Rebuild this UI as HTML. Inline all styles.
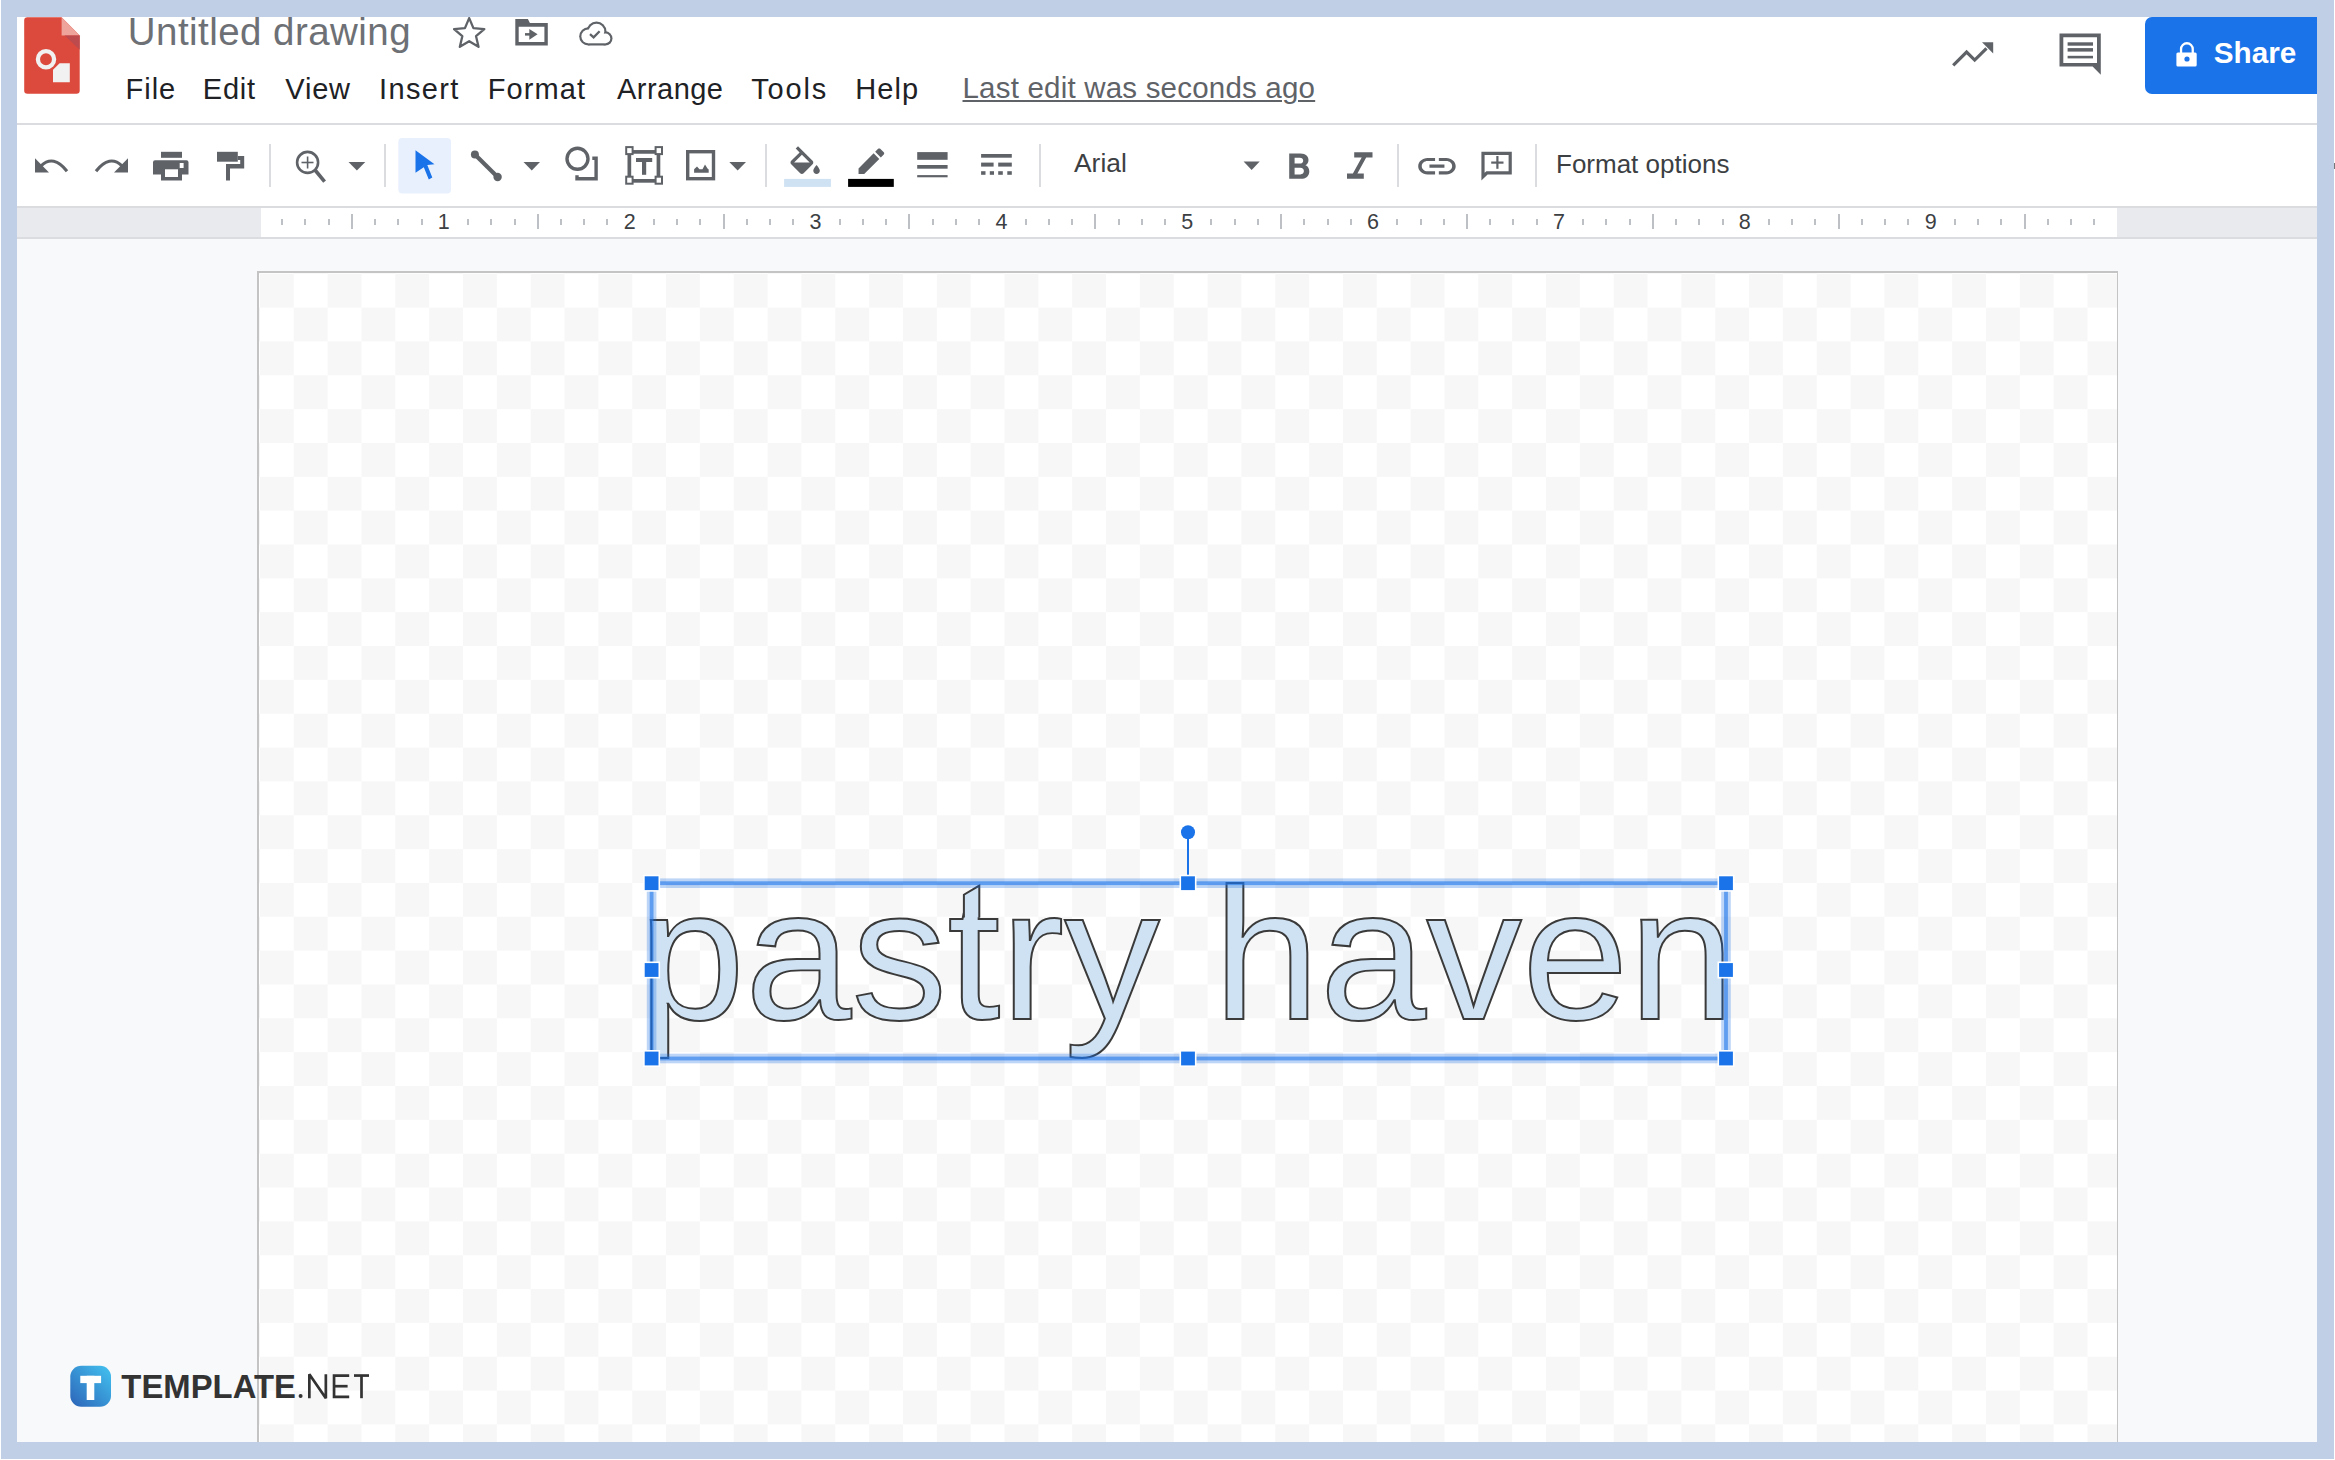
<!DOCTYPE html>
<html><head><meta charset="utf-8">
<style>
html,body{margin:0;padding:0;}
body{width:2335px;height:1460px;position:relative;overflow:hidden;background:#fff;font-family:"Liberation Sans",sans-serif;}
.a{position:absolute;}
.frame{position:absolute;left:1px;top:0;width:2333px;height:1459px;background:#c0cfe5;}
.main{position:absolute;left:17px;top:17px;width:2300px;height:1425px;overflow:hidden;background:#fff;}
.in{position:absolute;left:-17px;top:-17px;width:2335px;height:1460px;}
.t{position:absolute;white-space:nowrap;}
.menu{font-size:29px;line-height:29px;top:75px;color:#202124;}
.tk{width:2px;background:#bdc1c6;}
.rn{width:40px;text-align:center;top:211.8px;font-size:21.5px;line-height:21.5px;color:#3c4043;}
svg.ov{position:absolute;left:0;top:0;overflow:visible;}
</style></head>
<body>
<div class="frame"></div>
<div class="a" style="left:2334px;top:163px;width:1px;height:6px;background:#777"></div>
<div class="main"><div class="in">

<!-- header separator -->
<div class="a" style="left:17px;top:123px;width:2300px;height:2px;background:#dadce0"></div>

<!-- ruler -->
<div class="a" style="left:17px;top:206px;width:2300px;height:2px;background:#dadce0"></div>
<div class="a" style="left:17px;top:208px;width:2300px;height:29px;background:#e8eaed"></div>
<div class="a" style="left:261px;top:208px;width:1856px;height:29px;background:#fff"></div>
<div class="a" style="left:17px;top:237px;width:2300px;height:2px;background:#dadce0"></div>
<div class="a tk" style="left:281.23px;top:219px;height:6px"></div>
<div class="a tk" style="left:304.46px;top:219px;height:6px"></div>
<div class="a tk" style="left:327.69px;top:219px;height:6px"></div>
<div class="a tk" style="left:350.92px;top:214px;height:15px"></div>
<div class="a tk" style="left:374.15px;top:219px;height:6px"></div>
<div class="a tk" style="left:397.39px;top:219px;height:6px"></div>
<div class="a tk" style="left:420.62px;top:219px;height:6px"></div>
<div class="t rn" style="left:423.85px">1</div>
<div class="a tk" style="left:467.08px;top:219px;height:6px"></div>
<div class="a tk" style="left:490.31px;top:219px;height:6px"></div>
<div class="a tk" style="left:513.54px;top:219px;height:6px"></div>
<div class="a tk" style="left:536.77px;top:214px;height:15px"></div>
<div class="a tk" style="left:560.00px;top:219px;height:6px"></div>
<div class="a tk" style="left:583.23px;top:219px;height:6px"></div>
<div class="a tk" style="left:606.47px;top:219px;height:6px"></div>
<div class="t rn" style="left:609.70px">2</div>
<div class="a tk" style="left:652.93px;top:219px;height:6px"></div>
<div class="a tk" style="left:676.16px;top:219px;height:6px"></div>
<div class="a tk" style="left:699.39px;top:219px;height:6px"></div>
<div class="a tk" style="left:722.62px;top:214px;height:15px"></div>
<div class="a tk" style="left:745.85px;top:219px;height:6px"></div>
<div class="a tk" style="left:769.08px;top:219px;height:6px"></div>
<div class="a tk" style="left:792.31px;top:219px;height:6px"></div>
<div class="t rn" style="left:795.54px">3</div>
<div class="a tk" style="left:838.78px;top:219px;height:6px"></div>
<div class="a tk" style="left:862.01px;top:219px;height:6px"></div>
<div class="a tk" style="left:885.24px;top:219px;height:6px"></div>
<div class="a tk" style="left:908.47px;top:214px;height:15px"></div>
<div class="a tk" style="left:931.70px;top:219px;height:6px"></div>
<div class="a tk" style="left:954.93px;top:219px;height:6px"></div>
<div class="a tk" style="left:978.16px;top:219px;height:6px"></div>
<div class="t rn" style="left:981.39px">4</div>
<div class="a tk" style="left:1024.62px;top:219px;height:6px"></div>
<div class="a tk" style="left:1047.85px;top:219px;height:6px"></div>
<div class="a tk" style="left:1071.09px;top:219px;height:6px"></div>
<div class="a tk" style="left:1094.32px;top:214px;height:15px"></div>
<div class="a tk" style="left:1117.55px;top:219px;height:6px"></div>
<div class="a tk" style="left:1140.78px;top:219px;height:6px"></div>
<div class="a tk" style="left:1164.01px;top:219px;height:6px"></div>
<div class="t rn" style="left:1167.24px">5</div>
<div class="a tk" style="left:1210.47px;top:219px;height:6px"></div>
<div class="a tk" style="left:1233.70px;top:219px;height:6px"></div>
<div class="a tk" style="left:1256.93px;top:219px;height:6px"></div>
<div class="a tk" style="left:1280.16px;top:214px;height:15px"></div>
<div class="a tk" style="left:1303.39px;top:219px;height:6px"></div>
<div class="a tk" style="left:1326.63px;top:219px;height:6px"></div>
<div class="a tk" style="left:1349.86px;top:219px;height:6px"></div>
<div class="t rn" style="left:1353.09px">6</div>
<div class="a tk" style="left:1396.32px;top:219px;height:6px"></div>
<div class="a tk" style="left:1419.55px;top:219px;height:6px"></div>
<div class="a tk" style="left:1442.78px;top:219px;height:6px"></div>
<div class="a tk" style="left:1466.01px;top:214px;height:15px"></div>
<div class="a tk" style="left:1489.24px;top:219px;height:6px"></div>
<div class="a tk" style="left:1512.47px;top:219px;height:6px"></div>
<div class="a tk" style="left:1535.71px;top:219px;height:6px"></div>
<div class="t rn" style="left:1538.94px">7</div>
<div class="a tk" style="left:1582.17px;top:219px;height:6px"></div>
<div class="a tk" style="left:1605.40px;top:219px;height:6px"></div>
<div class="a tk" style="left:1628.63px;top:219px;height:6px"></div>
<div class="a tk" style="left:1651.86px;top:214px;height:15px"></div>
<div class="a tk" style="left:1675.09px;top:219px;height:6px"></div>
<div class="a tk" style="left:1698.32px;top:219px;height:6px"></div>
<div class="a tk" style="left:1721.55px;top:219px;height:6px"></div>
<div class="t rn" style="left:1724.78px">8</div>
<div class="a tk" style="left:1768.02px;top:219px;height:6px"></div>
<div class="a tk" style="left:1791.25px;top:219px;height:6px"></div>
<div class="a tk" style="left:1814.48px;top:219px;height:6px"></div>
<div class="a tk" style="left:1837.71px;top:214px;height:15px"></div>
<div class="a tk" style="left:1860.94px;top:219px;height:6px"></div>
<div class="a tk" style="left:1884.17px;top:219px;height:6px"></div>
<div class="a tk" style="left:1907.40px;top:219px;height:6px"></div>
<div class="t rn" style="left:1910.63px">9</div>
<div class="a tk" style="left:1953.86px;top:219px;height:6px"></div>
<div class="a tk" style="left:1977.09px;top:219px;height:6px"></div>
<div class="a tk" style="left:2000.33px;top:219px;height:6px"></div>
<div class="a tk" style="left:2023.56px;top:214px;height:15px"></div>
<div class="a tk" style="left:2046.79px;top:219px;height:6px"></div>
<div class="a tk" style="left:2070.02px;top:219px;height:6px"></div>
<div class="a tk" style="left:2093.25px;top:219px;height:6px"></div>

<!-- workspace -->
<div class="a" style="left:17px;top:239px;width:2300px;height:1221px;background:#f8f9fa"></div>

<!-- page -->
<div class="a" style="left:257px;top:271px;width:1861px;height:1200px;background:#c4c4c4"></div>
<div class="a" style="left:259px;top:273px;width:1858px;height:1200px;background-color:#fff;background-image:repeating-conic-gradient(#fff 0 25%, #f7f7f7 0 50%);background-size:67.7px 67.7px;background-position:0.94px 0.75px"></div>


<!-- google drawings logo -->
<svg class="ov" width="2335" height="1460" viewBox="0 0 2335 1460">
 <path d="M27.4 17.3 H61.6 L79.7 35.4 V90.5 Q79.7 93.7 76.5 93.7 H27.4 Q24.2 93.7 24.2 90.5 V20.5 Q24.2 17.3 27.4 17.3 Z" fill="#dc4a3d"/>
 <polygon points="61.6,17.3 79.7,35.4 61.6,35.4" fill="#eea39b"/>
 <polygon points="64.6,35.4 79.7,35.4 79.7,49.8" fill="#bd4a4c"/>
 <circle cx="46" cy="59.2" r="8.1" fill="none" stroke="#f1f1f1" stroke-width="4.3"/>
 <polygon points="59.6,63.3 69.8,63.3 69.8,82.2 53,82.2 53,69.8" fill="#f1f1f1"/>
</svg>

<!-- header text -->
<div class="t" style="left:127.8px;top:13px;font-size:38.5px;line-height:38.5px;color:#6d7075;letter-spacing:0.45px">Untitled drawing</div>
<div class="t menu" style="left:125.5px;letter-spacing:1.00px">File</div>
<div class="t menu" style="left:202.8px;letter-spacing:0.75px">Edit</div>
<div class="t menu" style="left:285.3px;letter-spacing:0.81px">View</div>
<div class="t menu" style="left:379.0px;letter-spacing:1.36px">Insert</div>
<div class="t menu" style="left:487.8px;letter-spacing:1.06px">Format</div>
<div class="t menu" style="left:617.0px;letter-spacing:0.47px">Arrange</div>
<div class="t menu" style="left:751.2px;letter-spacing:1.84px">Tools</div>
<div class="t menu" style="left:855.2px;letter-spacing:1.14px">Help</div>
<div class="t" style="left:962.5px;top:73.2px;font-size:29.5px;line-height:29.5px;color:#5f6368;letter-spacing:0.2px;text-decoration:underline;text-decoration-thickness:2px;text-underline-offset:2.2px">Last edit was seconds ago</div>

<!-- share button -->
<div class="a" style="left:2145px;top:17px;width:200px;height:76.5px;background:#1a73e8;border-radius:7px"></div>
<div class="t" style="left:2213.8px;top:37.6px;font-size:29.7px;line-height:29.5px;color:#fff;font-weight:bold">Share</div>

<!-- toolbar text -->
<div class="t" style="left:1074px;top:150.4px;font-size:26.4px;line-height:26.4px;color:#3c4043">Arial</div>
<div class="t" style="left:1556px;top:150.8px;font-size:26px;line-height:26px;color:#3c4043">Format options</div>


<!-- icons overlay -->
<svg class="ov" width="2335" height="1460" viewBox="0 0 2335 1460">
<g fill="#5f6368" stroke="none">
 <!-- undo -->
 <polygon points="35,158.3 35,172.5 49,172.5"/>
 <path d="M41 165.8 Q53.5 154 67 171.2" fill="none" stroke="#5f6368" stroke-width="3.1"/>
 <!-- redo -->
 <polygon points="128,158.3 128,172.5 114,172.5"/>
 <path d="M122 165.8 Q109.5 154 96 171.2" fill="none" stroke="#5f6368" stroke-width="3.1"/>
 <!-- print -->
 <rect x="161" y="151.8" width="21" height="6"/>
 <path d="M155 160.2 H186.5 Q188.5 160.2 188.5 162.2 V174.5 H182 V180.6 H161 V174.5 H153 V162.2 Q153 160.2 155 160.2 Z"/>
 <rect x="165" y="169.3" width="13" height="7.7" fill="#fff"/>
 <rect x="179.7" y="163" width="3.9" height="5" fill="#fff"/>
 <!-- paint format -->
 <rect x="217" y="151.8" width="20.8" height="9.9"/>
 <polygon points="237.8,156 244.2,156 244.2,168.6 230,168.6 230,180.6 226,180.6 226,164 240.2,164 240.2,160 237.8,160"/>
 <!-- separators -->
 <rect x="269" y="144" width="2" height="43" fill="#dadce0"/>
 <rect x="384" y="144" width="2" height="43" fill="#dadce0"/>
 <rect x="765" y="144" width="2" height="43" fill="#dadce0"/>
 <rect x="1039" y="144" width="2" height="43" fill="#dadce0"/>
 <rect x="1397" y="144" width="2" height="43" fill="#dadce0"/>
 <rect x="1535" y="144" width="2" height="43" fill="#dadce0"/>
 <!-- zoom -->
 <circle cx="307.6" cy="162.4" r="10.5" fill="none" stroke="#5f6368" stroke-width="2.6"/>
 <rect x="301.5" y="161.7" width="12" height="1.6"/>
 <rect x="306.8" y="156.5" width="1.6" height="12"/>
 <line x1="315" y1="170" x2="324.6" y2="181.6" stroke="#5f6368" stroke-width="3.6"/>
 <!-- dropdowns -->
 <polygon points="348.5,162 365.3,162 356.9,170.5"/>
 <polygon points="523.5,162 540,162 531.75,170.5"/>
 <polygon points="729.3,162 746,162 737.65,170.5"/>
 <polygon points="1243.6,161.5 1259.7,161.5 1251.65,170"/>
 <!-- select -->
 <rect x="398.3" y="138" width="52.7" height="55.6" rx="4" fill="#e8f0fe"/>
 <polygon points="415.5,150.3 434.5,164.3 427.3,165 432.3,177.6 428.8,179.6 423.8,167.2 415.5,172.8" fill="#1a73e8"/>
 <!-- line -->
 <line x1="474.9" y1="154.5" x2="497.6" y2="177" stroke="#5f6368" stroke-width="4.2"/>
 <circle cx="474.9" cy="154.5" r="4"/>
 <circle cx="497.6" cy="177" r="4.2"/>
 <!-- shape -->
 <circle cx="577.5" cy="158.8" r="10.5" fill="none" stroke="#5f6368" stroke-width="3.4"/>
 <path d="M592.3 158.2 H596.1 V178.7 H577 V175.3" fill="none" stroke="#5f6368" stroke-width="3.4"/>
 <!-- text box -->
 <rect x="629.35" y="151.9" width="29.1" height="28.95" fill="none" stroke="#5f6368" stroke-width="3.7"/>
 <rect x="626.2" y="147.1" width="6.4" height="7" fill="#fff" stroke="#5f6368" stroke-width="2"/>
 <rect x="655.6" y="147.1" width="6.4" height="7" fill="#fff" stroke="#5f6368" stroke-width="2"/>
 <rect x="626.2" y="176.7" width="6.4" height="7" fill="#fff" stroke="#5f6368" stroke-width="2"/>
 <rect x="655.6" y="176.7" width="6.4" height="7" fill="#fff" stroke="#5f6368" stroke-width="2"/>
 <rect x="636" y="158" width="16.2" height="4"/>
 <rect x="642" y="158" width="4.2" height="16.8"/>
 <!-- image -->
 <rect x="687.7" y="151.7" width="25.8" height="27" fill="none" stroke="#5f6368" stroke-width="3.4"/>
 <polygon points="694.1,172.8 694.1,169.3 697,166.6 699.5,169.2 702.5,169.2 705,164.6 707.5,168.4 708.7,169.4 708.7,172.8"/>
 <!-- fill bucket -->
 <g transform="translate(785.6,146.2) scale(1.63)"><path d="M16.56 8.94L7.62 0 6.21 1.41l2.38 2.38-5.15 5.15c-.59.59-.59 1.54 0 2.12l5.5 5.5c.29.29.68.44 1.06.44s.77-.15 1.06-.44l5.5-5.5c.59-.58.59-1.53 0-2.12zM5.21 10L10 5.21 14.79 10H5.21zM19 11.5s-2 2.17-2 3.5c0 1.1.9 2 2 2s2-.9 2-2c0-1.33-2-3.5-2-3.5z"/></g>
 <rect x="784.1" y="178.9" width="46.8" height="8" fill="#cfe2f3"/>
 <!-- pen -->
 <g transform="translate(852.5,148.4) scale(1.51)"><path d="M17.75 7L14 3.25l-10 10V17h3.75l10-10zm2.96-2.96c.39-.39.39-1.02 0-1.41L18.37.29c-.39-.39-1.02-.39-1.41 0L15 2.25 18.75 6l1.96-1.96z"/></g>
 <rect x="848.1" y="178.9" width="45.7" height="8" fill="#000"/>
 <!-- line weight -->
 <rect x="917.2" y="152.1" width="30.4" height="7.7"/>
 <rect x="917.2" y="165" width="30.4" height="3.7"/>
 <rect x="917.2" y="175.1" width="30.4" height="2.2"/>
 <!-- line dash -->
 <rect x="981.1" y="154" width="30.7" height="3.7"/>
 <rect x="981.1" y="162.6" width="12.5" height="4"/>
 <rect x="998.2" y="162.6" width="13.6" height="4"/>
 <rect x="981.1" y="171.2" width="4.4" height="3.6"/>
 <rect x="989.8" y="171.2" width="4.2" height="3.6"/>
 <rect x="998.2" y="171.2" width="4.6" height="3.6"/>
 <rect x="1007.3" y="171.2" width="4.5" height="3.6"/>
 <!-- bold -->
 <path fill-rule="evenodd" d="M1289.2 153.4 H1300.5 C1306 153.4 1308.5 156.5 1308.5 160 C1308.5 162.5 1307.2 164.4 1305.4 165.3 C1307.8 166.1 1309.3 168.4 1309.3 171.4 C1309.3 175.9 1306 178.8 1300.8 178.8 H1289.2 Z M1294.6 157.8 V163.6 H1299.8 C1301.9 163.6 1303.2 162.5 1303.2 160.7 C1303.2 158.9 1301.9 157.8 1299.8 157.8 Z M1294.6 167.8 V174.4 H1300.3 C1302.6 174.4 1303.9 173.1 1303.9 171.1 C1303.9 169.1 1302.6 167.8 1300.3 167.8 Z"/>
 <!-- italic -->
 <polygon points="1354.2,152.3 1372.5,152.3 1372.5,157.5 1366.2,157.5 1357.4,173.4 1363.8,173.4 1363.8,178.8 1347,178.8 1347,173.4 1352.9,173.4 1361.7,157.5 1354.2,157.5"/>
 <!-- link -->
 <g transform="translate(1414.45,146.5) scale(1.875,1.64)"><path d="M3.9 12c0-1.71 1.39-3.1 3.1-3.1h4V7H7c-2.76 0-5 2.240-5 5s2.24 5 5 5h4v-1.9H7c-1.71 0-3.1-1.39-3.1-3.1zM8 13h8v-2H8v2zm9-6h-4v1.9h4c1.71 0 3.1 1.39 3.1 3.1s-1.39 3.1-3.1 3.1h-4V17h4c2.76 0 5-2.24 5-5s-2.24-5-5-5z"/></g>
 <!-- add comment -->
 <path fill-rule="evenodd" d="M1481.4 180.6 V151.8 H1511.8 V174.4 H1487.6 Z M1484.6 155 V172.8 L1486.4 171.2 H1508.6 V155 Z"/>
 <rect x="1491.2" y="161.5" width="12.3" height="2.2"/>
 <rect x="1496.3" y="156" width="2.2" height="12.8"/>

 <!-- header: star -->
 <polygon points="484.28,29.08 473.42,28.14 469.18,18.14 464.94,28.15 454.08,29.08 462.32,36.22 459.85,46.83 469.18,41.20 478.51,46.83 476.05,36.22" fill="none" stroke="#5f6368" stroke-width="2.3" stroke-linejoin="round"/>
 <!-- folder -->
 <path fill-rule="evenodd" d="M515.3 45.5 V19 H527.9 L529.9 23.1 H547.8 V45.5 Z M518.7 26.8 V42.1 H544.4 V26.8 Z"/>
 <rect x="525" y="33.1" width="6" height="2.5"/>
 <polygon points="529.3,28.9 537.6,34.35 529.3,39.8"/>
 <!-- cloud -->
 <circle cx="588.3" cy="36.4" r="9.1"/><circle cx="596.5" cy="31.5" r="10"/><circle cx="605.4" cy="38.4" r="7.1"/>
 <rect x="588.3" y="36.4" width="17.1" height="9.1"/>
 <g fill="#fff"><circle cx="588.3" cy="36.4" r="6.9"/><circle cx="596.5" cy="31.5" r="7.8"/><circle cx="605.4" cy="38.4" r="4.9"/>
 <rect x="588.3" y="36.4" width="17.1" height="6.9"/></g>
 <polyline points="590,34.2 593.6,37.4 599.6,31.3" fill="none" stroke="#5f6368" stroke-width="2.3"/>
 <!-- trending -->
 <polyline points="1953.2,65.4 1966.6,52 1974.7,60.1 1986.5,48.3" fill="none" stroke="#5f6368" stroke-width="3.2"/>
 <polygon points="1982,42.3 1993.2,42.3 1993.2,53.5"/>
 <!-- comment -->
 <path fill-rule="evenodd" d="M2059.5 33.5 H2100.8 V74.7 L2092.6 66.6 H2059.5 Z M2063.3 37.2 V63 H2097 V37.2 Z"/>
 <rect x="2067.6" y="42.3" width="25.4" height="3.4"/>
 <rect x="2067.6" y="48.1" width="25.4" height="3.5"/>
 <rect x="2067.6" y="55.8" width="25.4" height="2.6"/>
</g>
<!-- lock -->
<g fill="#fff">
 <path d="M2181.05 53 V49.1 A5.85 5.85 0 0 1 2192.75 49.1 V53" fill="none" stroke="#fff" stroke-width="2.3"/>
 <rect x="2176.4" y="52.4" width="20.3" height="14.1" rx="1.5"/>
 <circle cx="2187" cy="59" r="2.6" fill="#1a73e8"/>
</g>
</svg>

<!-- drawing text -->
<div class="t" style="left:638.5px;top:858.3px;font-size:191.5px;line-height:191.5px;color:#cfe2f3;-webkit-text-stroke:2px #3a3a3a;transform:scaleY(0.975);transform-origin:0 161.7px">pastry haven</div>


<!-- arial-like t top -->
<svg class="ov" width="2335" height="1460" viewBox="0 0 2335 1460">
 <polygon points="963.9,894.7 979.3,885.6 979.3,917.3 963.9,917.3" fill="#cfe2f3"/>
 <path d="M963.9 917.4 V894.7 L979.3 885.6 V917.6" fill="none" stroke="#3a3a3a" stroke-width="2"/>
</svg>

<!-- selection -->
<svg class="ov" width="2335" height="1460" viewBox="0 0 2335 1460">
 <rect x="651.6" y="883.2" width="1074.4" height="175.3" fill="none" stroke="rgba(26,115,232,0.29)" stroke-width="9.6"/>
 <rect x="651.6" y="883.2" width="1074.4" height="175.3" fill="none" stroke="rgba(26,115,232,0.58)" stroke-width="3.8"/>
 <rect x="1187" y="838" width="2" height="38" fill="#1a73e8"/>
 <circle cx="1188" cy="832.3" r="7" fill="#1a73e8"/>
 <g fill="#1a73e8" stroke="#fff" stroke-width="1.6">
  <rect x="643.9" y="875.5" width="15.4" height="15.4"/>
  <rect x="1180.3" y="875.5" width="15.4" height="15.4"/>
  <rect x="1718.3" y="875.5" width="15.4" height="15.4"/>
  <rect x="643.9" y="962.3" width="15.4" height="15.4"/>
  <rect x="1718.3" y="962.3" width="15.4" height="15.4"/>
  <rect x="643.9" y="1050.8" width="15.4" height="15.4"/>
  <rect x="1180.3" y="1050.8" width="15.4" height="15.4"/>
  <rect x="1718.3" y="1050.8" width="15.4" height="15.4"/>
 </g>
</svg>

<!-- template.net logo -->
<svg class="ov" width="2335" height="1460" viewBox="0 0 2335 1460">
 <defs><linearGradient id="tg" x1="1" y1="0" x2="0" y2="1"><stop offset="0" stop-color="#43c3f0"/><stop offset="1" stop-color="#2c63b8"/></linearGradient></defs>
 <rect x="70.3" y="1365.7" width="40.7" height="41.1" rx="11" fill="url(#tg)"/>
 <rect x="80.3" y="1375.8" width="20.8" height="7.3" fill="#fff"/>
 <rect x="86.7" y="1375.8" width="7.6" height="24.2" fill="#fff"/>
</svg>
<div class="t" style="left:121.3px;top:1371.2px;font-size:32.8px;line-height:32.8px;color:#333;font-weight:bold;letter-spacing:0.05px">TEMPLATE</div>
<svg class="ov" width="2335" height="1460" viewBox="0 0 2335 1460"><g fill="none" stroke="#333" stroke-width="2.7">
 <circle cx="300.6" cy="1396" r="1.2" fill="#333" stroke-width="1.6"/>
 <polyline points="309.35,1398.2 309.35,1374.2 325.85,1398.2 325.85,1374.2" stroke-linejoin="miter" stroke-miterlimit="2"/>
 <polyline points="349.2,1375.55 334.05,1375.55 334.05,1396.85 349.2,1396.85"/>
 <line x1="334.05" y1="1386.2" x2="347.6" y2="1386.2"/>
 <line x1="354" y1="1375.55" x2="369" y2="1375.55"/>
 <line x1="361.5" y1="1375.55" x2="361.5" y2="1398.2"/>
</g></svg>

</div></div>
</body></html>
